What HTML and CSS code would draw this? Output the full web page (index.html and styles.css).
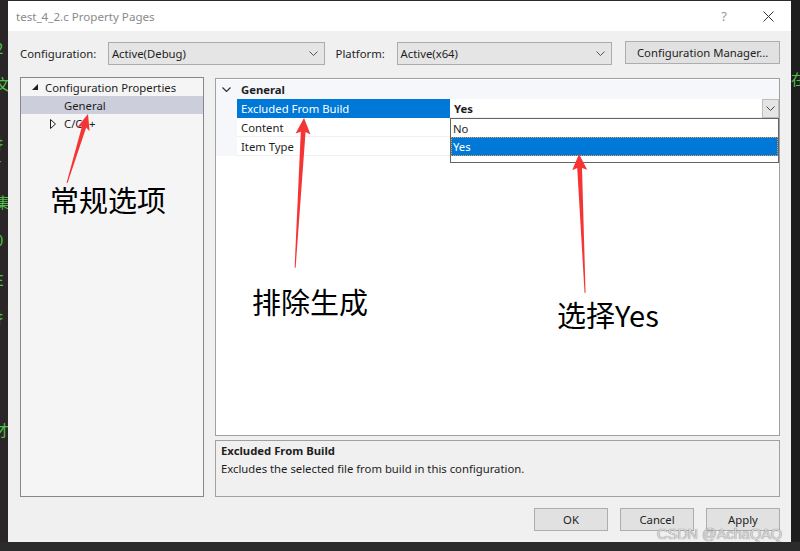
FILE: index.html
```html
<!DOCTYPE html>
<html lang="en">
<head>
  <meta charset="UTF-8">
  <title>test_4_2.c Property Pages</title>
  <link rel="stylesheet" href="styles.css">
</head>
<body>
  <div class="screen">
    <div class="edge-left">
      <span style="margin-top: 8px">(</span>
      <span style="margin-top: 10px">2</span>
      <span style="margin-top: 16px">文</span>
      <span style="margin-top: 40px">扌</span>
      <span>r</span>
      <span style="margin-top: 18px">集</span>
      <span style="margin-top: 18px">0</span>
      <span>i</span>
      <span>E</span>
      <span style="margin-top: 18px">扌</span>
      <span style="margin-top: 92px">才</span>
      <span>l</span>
      <span style="margin-top: 22px">.</span>
    </div>

    <div class="dialog">
      <div class="titlebar">
        <span class="title">test_4_2.c Property Pages</span>
        <span class="tb-help">?</span>
        <svg class="tb-close" width="11" height="11" viewBox="0 0 11 11">
          <path d="M0.5 0.5 L10.5 10.5 M10.5 0.5 L0.5 10.5" stroke="#333" stroke-width="1" fill="none"/>
        </svg>
      </div>

      <div class="content">
        <div class="config-row">
          <span class="label label-config">Configuration:</span>
          <div class="combo combo-config">
            <span>Active(Debug)</span>
            <svg width="9" height="5" viewBox="0 0 9 5"><path d="M0.5 0.5 L4.5 4.5 L8.5 0.5" stroke="#555" fill="none"/></svg>
          </div>
          <span class="label label-platform">Platform:</span>
          <div class="combo combo-platform">
            <span>Active(x64)</span>
            <svg width="9" height="5" viewBox="0 0 9 5"><path d="M0.5 0.5 L4.5 4.5 L8.5 0.5" stroke="#555" fill="none"/></svg>
          </div>
          <div class="btn btn-manager">Configuration Manager...</div>
        </div>

        <div class="main">
          <div class="tree">
            <div class="tree-item">
              <svg class="tri" width="6" height="6" viewBox="0 0 6 6"><path d="M6 0 L6 6 L0 6 Z" fill="#1e1e1e"/></svg>
              <span>Configuration Properties</span>
            </div>
            <div class="tree-item tree-child selected"><span>General</span></div>
            <div class="tree-item tree-child">
              <svg class="tri-open" width="6" height="10" viewBox="0 0 6 10"><path d="M0.5 0.5 L5.5 5 L0.5 9.5 Z" fill="none" stroke="#1e1e1e"/></svg>
              <span>C/C++</span>
            </div>
          </div>

          <div class="right-col">
            <div class="grid">
              <div class="grid-row grid-header">
                <div class="gutter">
                  <svg width="9" height="5" viewBox="0 0 9 5"><path d="M0.5 0.5 L4.5 4.5 L8.5 0.5" stroke="#333" stroke-width="1.2" fill="none"/></svg>
                </div>
                <div class="cell-head">General</div>
              </div>
              <div class="grid-row">
                <div class="gutter"></div>
                <div class="cell-name active">Excluded From Build</div>
                <div class="cell-value bold">
                  <span>Yes</span>
                  <div class="drop-btn">
                    <svg width="9" height="5" viewBox="0 0 9 5"><path d="M0.5 0.5 L4.5 4.5 L8.5 0.5" stroke="#444" fill="none"/></svg>
                  </div>
                </div>
              </div>
              <div class="grid-row">
                <div class="gutter"></div>
                <div class="cell-name">Content</div>
                <div class="cell-value"></div>
              </div>
              <div class="grid-row">
                <div class="gutter"></div>
                <div class="cell-name">Item Type</div>
                <div class="cell-value"></div>
              </div>

              <div class="droplist">
                <div class="drop-item">No</div>
                <div class="drop-item picked">Yes</div>
              </div>
            </div>

            <div class="desc">
              <div class="desc-title">Excluded From Build</div>
              <div class="desc-text">Excludes the selected file from build in this configuration.</div>
            </div>
          </div>
        </div>

        <div class="buttons">
          <div class="btn">OK</div>
          <div class="btn">Cancel</div>
          <div class="btn">Apply</div>
        </div>
      </div>
    </div>

    <div class="edge-right"><span>在</span></div>
  </div>

  <!-- annotations drawn on top of the screenshot -->
  <svg class="arrows" width="800" height="551" viewBox="0 0 800 551">
    <g fill="#f53535">
      <polygon transform="translate(88 114) rotate(16.9)" points="0,0 6.5,16 2.2,13.5 0.5,72 -0.5,72 -2.2,13.5 -6.5,16"/>
      <polygon transform="translate(304 118) rotate(3.4)" points="0,0 7.5,16 2.4,14 0.5,150 -0.5,150 -2.4,14 -7.5,16"/>
      <polygon transform="translate(579 154) rotate(-2.5)" points="0,0 7.5,16 2.4,14 0.5,139 -0.5,139 -2.4,14 -7.5,16"/>
    </g>
  </svg>
  <div class="note note-general">常规选项</div>
  <div class="note note-exclude">排除生成</div>
  <div class="note note-yes">选择Yes</div>
  <div class="watermark">CSDN @AchaQAQ</div>
</body>
</html>
```

FILE: styles.css
```css
body {
  margin: 0;
  background: #2b2b2b;
  font-family: "Noto Sans", "Liberation Sans", sans-serif;
  font-size: 11.3px;
  color: #1e1e1e;
  overflow: hidden;
  position: relative;
  width: 800px;
  height: 551px;
}

.screen {
  display: flex;
  height: 542px;
}

.edge-left {
  width: 8px;
  background: #2a2627;
  display: flex;
  flex-direction: column;
  overflow: hidden;
  color: #4fc04a;
  font-family: "Noto Sans CJK SC", sans-serif;
  font-size: 15px;
  line-height: 20px;
}

.edge-left span {
  margin-left: -5px;
  display: block;
}

.edge-right {
  flex: 1;
  background: #1e1e1e;
  overflow: hidden;
  color: #4fc04a;
  font-family: "Noto Sans CJK SC", sans-serif;
  font-size: 15px;
  padding-top: 68px;
}

.dialog {
  width: 783px;
  margin-top: 1px;
  background: #f0f0f0;
  display: flex;
  flex-direction: column;
}

.titlebar {
  height: 30px;
  background: #fff;
  display: flex;
  align-items: center;
  padding-left: 8px;
}

.title {
  color: #8a8a8a;
  font-size: 11.6px;
  flex: 1;
}

.tb-help {
  color: #999;
  font-size: 13px;
  margin-right: 36px;
}

.tb-close {
  margin-right: 17px;
}

.content {
  padding: 11px 11px 0 12px;
  display: flex;
  flex-direction: column;
}

.config-row {
  display: flex;
  align-items: center;
  height: 23px;
  margin-bottom: 1px;
}

.label-config {
  width: 88px;
}

.label-platform {
  width: 61px;
  margin-left: 11px;
}

.combo {
  height: 21px;
  background: #e5e5e5;
  border: 1px solid #acacac;
  display: flex;
  align-items: center;
  justify-content: space-between;
  padding: 0 6px 0 3px;
  box-sizing: content-box;
}

.combo-config {
  width: 206px;
}

.combo-platform {
  width: 205px;
}

.btn {
  height: 21px;
  background: #e1e1e1;
  border: 1px solid #adadad;
  display: flex;
  align-items: center;
  justify-content: center;
  width: 72px;
}

.btn-manager {
  width: 153px;
  margin-left: 13px;
  margin-top: -2px;
}

.main {
  display: flex;
  gap: 11px;
  margin-top: 11px;
  height: 420px;
}

.tree {
  width: 182px;
  border: 1px solid #828790;
  background: #f5f5f5;
}

.tree-item {
  height: 18px;
  display: flex;
  align-items: center;
  padding-left: 24px;
  position: relative;
}

.tree-item .tri {
  position: absolute;
  left: 11px;
  top: 6px;
}

.tree-child {
  padding-left: 43px;
}

.tree-item .tri-open {
  position: absolute;
  left: 29px;
  top: 5px;
}

.selected {
  background: #cccedb;
}

.right-col {
  flex: 1;
  display: flex;
  flex-direction: column;
  gap: 4px;
  padding-top: 1px;
}

.grid {
  height: 355px;
  border: 1px solid #a0a0a0;
  background: #fff;
  position: relative;
  padding-top: 1px;
}

.grid-row {
  display: flex;
  height: 19px;
}

.grid-header {
  background: #f5f7fa;
}

.gutter {
  width: 21px;
  background: #f5f7fa;
  display: flex;
  align-items: center;
  justify-content: center;
}

.cell-head {
  font-weight: bold;
  padding-left: 4px;
  display: flex;
  align-items: center;
}

.cell-name {
  width: 209px;
  padding-left: 4px;
  display: flex;
  align-items: center;
  border-bottom: 1px solid #f0f0f0;
}

.cell-name.active {
  background: #0078d7;
  color: #fff;
  border-bottom-color: #0078d7;
}

.cell-value {
  flex: 1;
  display: flex;
  align-items: center;
  justify-content: space-between;
  padding-left: 4px;
  border-bottom: 1px solid #f0f0f0;
}

.bold {
  font-weight: bold;
}

.drop-btn {
  width: 15px;
  height: 17px;
  background: #e5e5e5;
  border: 1px solid #bcbcbc;
  display: flex;
  align-items: center;
  justify-content: center;
  margin-top: 1px;
}

.droplist {
  position: absolute;
  left: 234px;
  top: 39px;
  width: 327px;
  height: 43px;
  border: 1px solid #646464;
  background: #fff;
}

.drop-item {
  height: 18px;
  display: flex;
  align-items: center;
  padding-left: 2px;
  box-sizing: border-box;
}

.drop-item.picked {
  height: 19px;
  background: #0078d7;
  color: #fff;
  border: 1px dotted #e8a040;
  padding-left: 1px;
}

.desc {
  border: 1px solid #a0a0a0;
  background: #f0f0f0;
  padding: 1px 5px 0;
  box-sizing: border-box;
  height: 57px;
}

.desc-title {
  font-weight: bold;
  line-height: 18px;
}

.desc-text {
  line-height: 18px;
}

.buttons {
  display: flex;
  justify-content: flex-end;
  gap: 12px;
  margin-top: 11px;
}

.arrows {
  position: absolute;
  left: 0;
  top: 0;
  pointer-events: none;
}

.note {
  position: absolute;
  font-family: "Noto Sans CJK SC", sans-serif;
  font-size: 29px;
  line-height: 1;
  color: #000;
}

.note-general {
  left: 50px;
  top: 185px;
}

.note-exclude {
  left: 252px;
  top: 287px;
}

.note-yes {
  left: 557px;
  top: 300px;
}

.watermark {
  position: absolute;
  left: 657px;
  top: 526px;
  font-family: "Liberation Sans", sans-serif;
  font-size: 14.5px;
  color: #dadada;
  text-shadow: 0 0 1px #5a5a5a;
}
```
